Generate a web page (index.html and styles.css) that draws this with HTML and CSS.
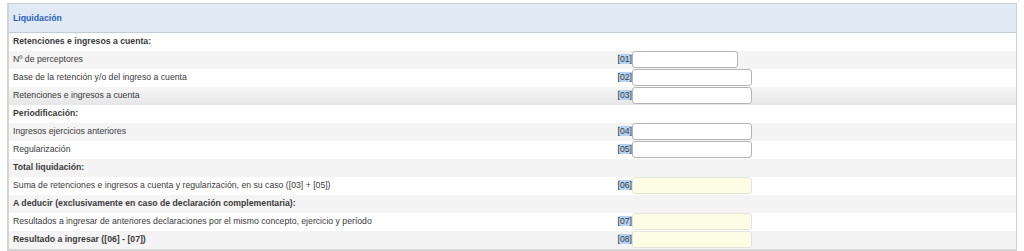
FILE: index.html
```html
<!DOCTYPE html>
<html lang="es">
<head>
    <meta charset="UTF-8">
    <title>Liquidación</title>
    <link rel="stylesheet" href="styles.css">
</head>
<body>
    <div class="panel">
        <div class="panel-header">Liquidación</div>
        <div class="panel-body">
            <div class="row heading"><span class="label">Retenciones e ingresos a cuenta:</span></div>
            <div class="row">
                <span class="label">Nº de perceptores</span>
                <span class="code"><span>[01]</span></span>
                <input type="text" class="field short">
            </div>
            <div class="row">
                <span class="label">Base de la retención y/o del ingreso a cuenta</span>
                <span class="code"><span>[02]</span></span>
                <input type="text" class="field">
            </div>
            <div class="row hover">
                <span class="label">Retenciones e ingresos a cuenta</span>
                <span class="code"><span>[03]</span></span>
                <input type="text" class="field">
            </div>
            <div class="row heading"><span class="label">Periodificación:</span></div>
            <div class="row">
                <span class="label">Ingresos ejercicios anteriores</span>
                <span class="code"><span>[04]</span></span>
                <input type="text" class="field">
            </div>
            <div class="row">
                <span class="label">Regularización</span>
                <span class="code"><span>[05]</span></span>
                <input type="text" class="field">
            </div>
            <div class="row heading"><span class="label">Total liquidación:</span></div>
            <div class="row">
                <span class="label">Suma de retenciones e ingresos a cuenta y regularización, en su caso ([03] + [05])</span>
                <span class="code"><span>[06]</span></span>
                <input type="text" class="field calc" readonly>
            </div>
            <div class="row heading"><span class="label">A deducir (exclusivamente en caso de declaración complementaria):</span></div>
            <div class="row">
                <span class="label">Resultados a ingresar de anteriores declaraciones por el mismo concepto, ejercicio y período</span>
                <span class="code"><span>[07]</span></span>
                <input type="text" class="field calc">
            </div>
            <div class="row heading">
                <span class="label">Resultado a ingresar ([06] - [07])</span>
                <span class="code"><span>[08]</span></span>
                <input type="text" class="field calc" readonly>
            </div>
        </div>
    </div>
</body>
</html>
```

FILE: styles.css
```css
body {
    font-family: 'Liberation Sans', Arial, sans-serif;
    font-size: 8.7px;
    color: #3a3a3a;
    margin: 0;
    padding: 3px 7px 0 7px;
    background-color: white;
}
.panel {
    border: 1px solid #cfcfcf;
    border-left: 2px solid #d4d4d4;
    border-bottom: 2px solid #d4d4d4;
}
.panel-header {
    background-color: #dfeaf4;
    border-bottom: 1px solid #c4ccd4;
    color: #2862b8;
    font-weight: bold;
    height: 28px;
    line-height: 28px;
    padding-left: 4px;
}
.row {
    display: grid;
    grid-template-columns: 604px 19px auto;
    align-items: start;
    height: 18px;
}
.row:nth-child(even) {
    background-color: #f4f4f4;
}
.row.hover {
    background: linear-gradient(#f6f6f6, #e6e6e6);
}
.row .label {
    padding: 3px 0 0 4px;
    line-height: 11px;
}
.heading .label {
    font-weight: bold;
}
.code {
    text-align: right;
    padding-top: 3px;
    line-height: 11px;
}
.code span {
    background-color: #b5d2f3;
    color: #3a3a3a;
}
.field {
    box-sizing: border-box;
    width: 120px;
    height: 17px;
    margin: 0;
    padding: 0 3px;
    border: 1px solid #b4b4b4;
    border-radius: 3px;
    background-color: white;
    font-size: 9px;
    outline: none;
}
.field.short {
    width: 106px;
}
.field.calc {
    background-color: #fdfde6;
    border-color: #e2e6d8;
}
```
